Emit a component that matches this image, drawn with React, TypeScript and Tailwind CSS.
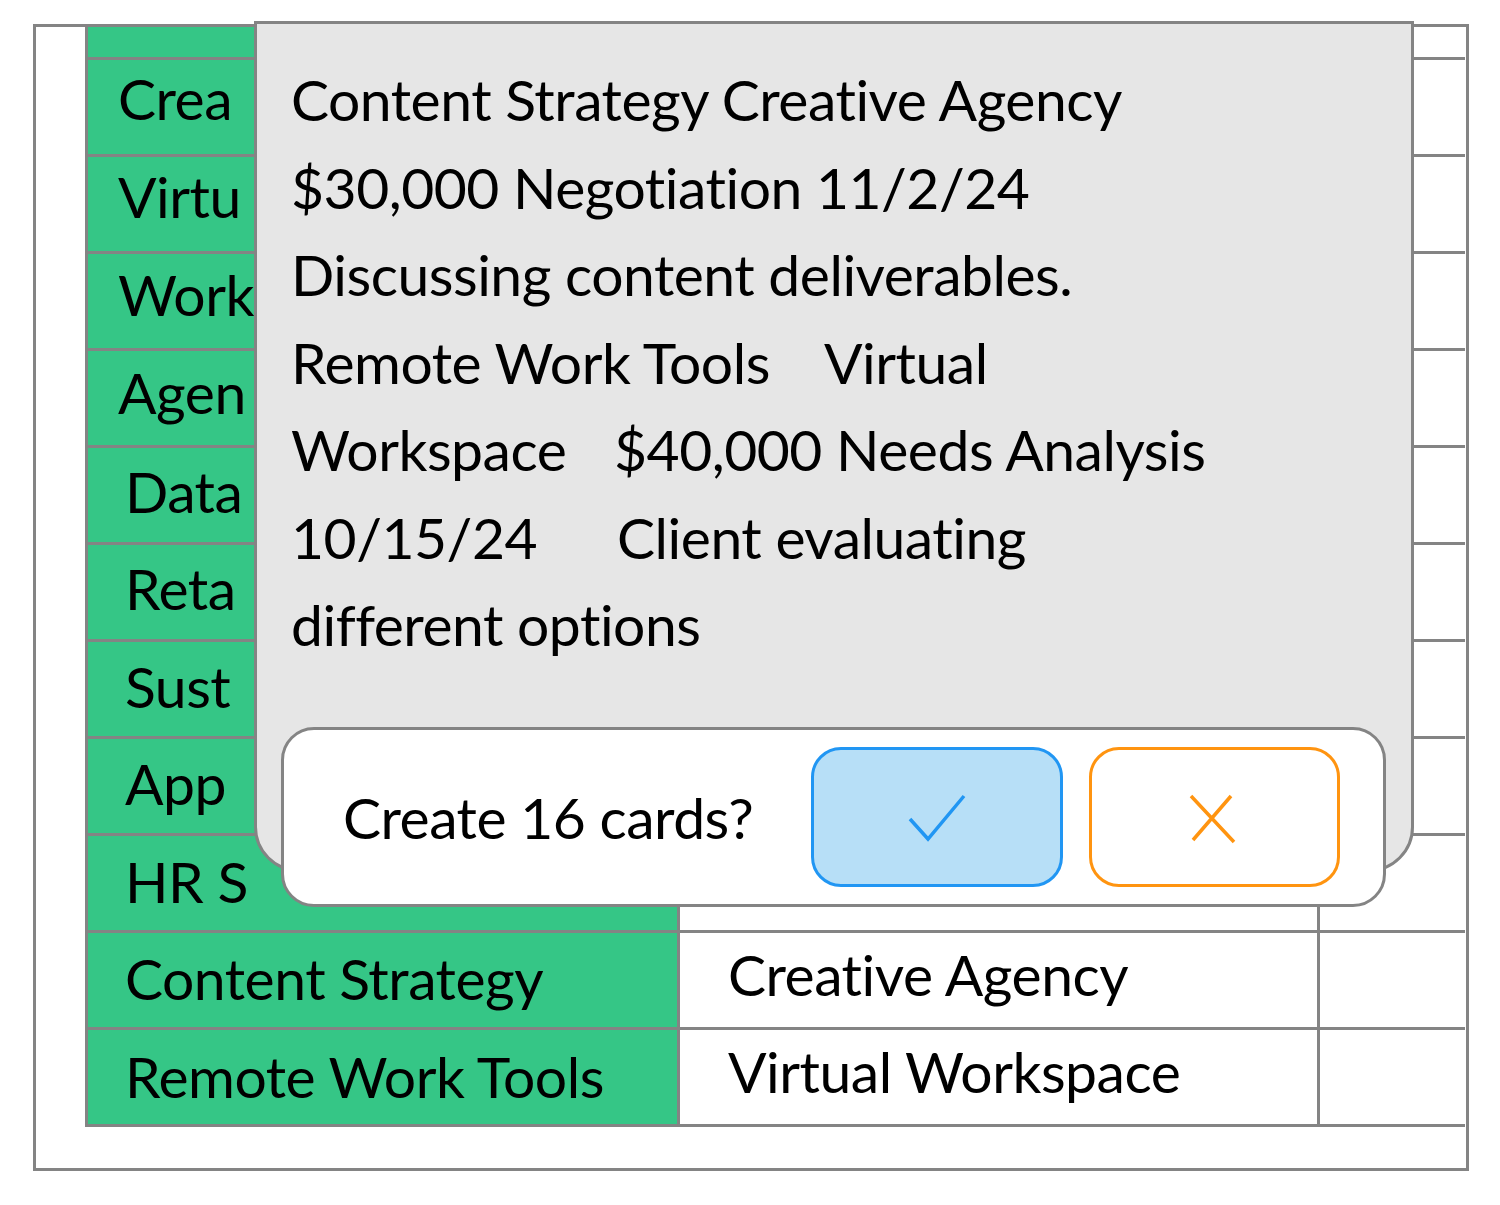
import React from "react";

type Row = { name: string; company?: string; pad: string };

const rows: Row[] = [
  { name: "", pad: "pl-[37px] pb-[6px]" },
  { name: "Crea", pad: "pl-[30px] pb-[18px]" },
  { name: "Virtu", pad: "pl-[30px] pb-[16px]" },
  { name: "Work", pad: "pl-[30px] pb-[14px]" },
  { name: "Agen", pad: "pl-[30px] pb-[12px]" },
  { name: "Data", pad: "pl-[37px] pb-[8px]" },
  { name: "Reta", pad: "pl-[37px] pb-[8px]" },
  { name: "Sust", pad: "pl-[37px] pb-[6px]" },
  { name: "App", pad: "pl-[37px] pb-[6px]" },
  { name: "HR S", pad: "pl-[37px] pb-[4px]" },
  { name: "Content Strategy", company: "Creative Agency", pad: "pl-[37px] pb-[4px]" },
  { name: "Remote Work Tools", company: "Virtual Workspace", pad: "pl-[37px] pb-[2px]" },
];

function CheckIcon() {
  return (
    <svg width="58" height="48" viewBox="0 0 58 48" className="mt-[2px]">
      <polyline points="2,25 20,45 56,2" fill="none" stroke="#2196f3" strokeWidth="3.5" />
    </svg>
  );
}

function CrossIcon() {
  return (
    <svg width="48" height="50" viewBox="0 0 48 50" className="mt-[4px] -ml-[3px]">
      <path d="M2 2 L45 48 M42 2 L4 46" fill="none" stroke="#ff9410" strokeWidth="3.5" />
    </svg>
  );
}

export default function App() {
  return (
    <div className="relative w-[1500px] h-[1205px] bg-white overflow-hidden font-['Lato',sans-serif] text-black tracking-[-0.03em] [font-variant-ligatures:none]">
      {/* Sheet */}
      <div className="ml-[33px] mt-[24px] w-[1436px] h-[1147px] border-[3px] border-[#848484] overflow-hidden">
        <div className="ml-[49px] mt-[-64px] w-[1380px] border-l-[3px] border-[#848484]">
          {rows.map((r, i) => (
            <div key={i} className="flex h-[97px] border-b-[3px] border-[#848484]">
              <div
                className={`w-[592px] flex items-center bg-[#35c686] border-r-[3px] border-[#848484] text-[57px] leading-[70px] ${r.pad}`}
              >
                {r.name}
              </div>
              <div className="w-[640px] flex items-center border-r-[3px] border-[#848484] pl-[48px] pb-[12px] text-[57px] leading-[70px]">
                {r.company}
              </div>
              <div className="flex-1" />
            </div>
          ))}
        </div>
      </div>

      {/* Pasted data preview */}
      <div className="absolute left-[254px] top-[21px] w-[1160px] h-[851px] bg-[#e6e6e6] border-[3px] border-[#848484] rounded-b-[45px] pl-[34px] pt-[32px] text-[57px] leading-[87.5px] whitespace-nowrap">
        <div>Content Strategy Creative Agency</div>
        <div>$30,000 Negotiation 11/2/24</div>
        <div>Discussing content deliverables.</div>
        <div>
          <span className="inline-block w-[533px]">Remote Work Tools</span>Virtual
        </div>
        <div>
          <span className="inline-block w-[323px]">Workspace</span>$40,000 Needs Analysis
        </div>
        <div>
          <span className="inline-block w-[326px]">10/15/24</span>Client evaluating
        </div>
        <div>different options</div>
      </div>

      {/* Confirm */}
      <div className="absolute left-[281px] top-[727px] w-[1105px] h-[180px] bg-white border-[3px] border-[#848484] rounded-[33px] flex items-center pl-[59px] pr-[43px]">
        <span className="text-[57px] leading-[70px]">Create 16 cards?</span>
        <div className="ml-auto flex gap-[26px]">
          <button className="w-[252px] h-[140px] rounded-[30px] border-[3px] border-[#2196f3] bg-[#b7dff7] flex items-center justify-center">
            <CheckIcon />
          </button>
          <button className="w-[251px] h-[140px] rounded-[30px] border-[3px] border-[#ff9410] bg-white flex items-center justify-center">
            <CrossIcon />
          </button>
        </div>
      </div>
    </div>
  );
}
